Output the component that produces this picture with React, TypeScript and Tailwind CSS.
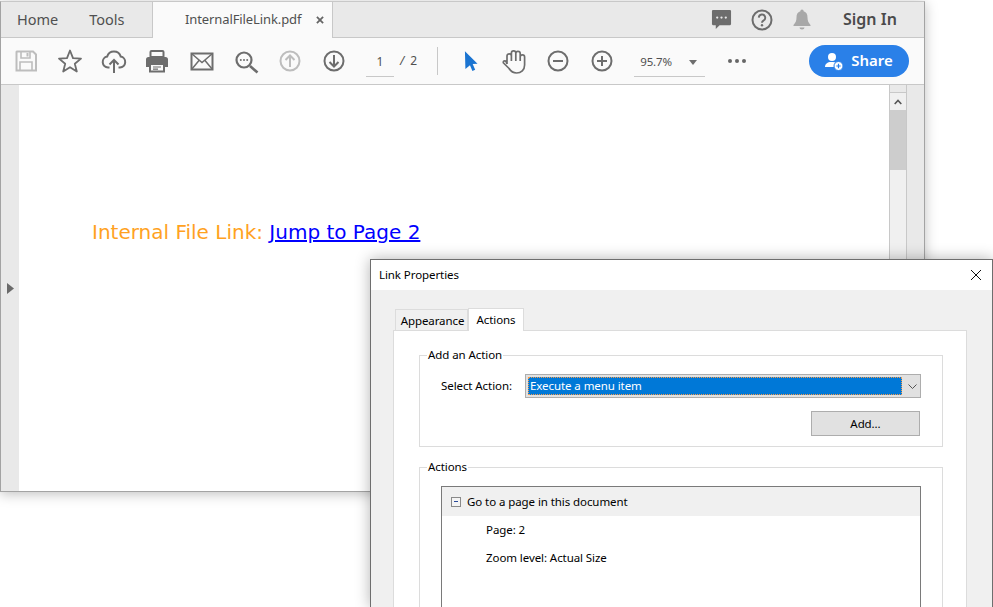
const GRAY = "#6d6d6d";

const ToolIcon = ({ children }: { children: React.ReactNode }): JSX.Element => (
  <div className="w-[44px] h-full flex items-center justify-center shrink-0">
    <svg width="26" height="26" viewBox="0 0 26 26" fill="none">
      {children}
    </svg>
  </div>
);

const TopBar = (): JSX.Element => (
  <div className="h-[36px] flex bg-[#e9e9e9] border-b border-[#c8c8c8] text-[14.5px] text-[#505050] shrink-0">
    <div className="w-[151px] flex items-center pl-[16px] gap-[31px]">
      <span>Home</span>
      <span>Tools</span>
    </div>
    <div className="w-[181px] -mb-px bg-[#fafafa] border-x border-[#c8c8c8] flex items-center pl-[32px] gap-[15px] text-[13px] tracking-[-0.1px]">
      <span>InternalFileLink.pdf</span>
      <svg width="8" height="8" viewBox="0 0 9 9">
        <path d="M1 1l7 7M8 1l-7 7" stroke="#666" strokeWidth="2" />
      </svg>
    </div>
    <div className="flex-1 flex items-center">
      <svg className="ml-[378px]" width="21" height="21" viewBox="0 0 22 22">
        <path d="M2 1h18a1.5 1.5 0 0 1 1 1v14a1.5 1.5 0 0 1-1 1H9l-4 4v-4H2a1.5 1.5 0 0 1-1-1V2a1.5 1.5 0 0 1 1-1z" fill={GRAY} />
        <circle cx="6.5" cy="9" r="1.2" fill="#e9e9e9" />
        <circle cx="11" cy="9" r="1.2" fill="#e9e9e9" />
        <circle cx="15.5" cy="9" r="1.2" fill="#e9e9e9" />
      </svg>
      <svg className="ml-[19px]" width="22" height="22" viewBox="0 0 22 22" fill="none">
        <circle cx="11" cy="11" r="9.5" stroke={GRAY} strokeWidth="2" />
        <path d="M7.8 8.6a3.2 3.2 0 1 1 4.6 3c-1 .6-1.4 1-1.4 2.2" stroke={GRAY} strokeWidth="1.9" />
        <circle cx="11" cy="16.3" r="1.2" fill={GRAY} />
      </svg>
      <svg className="ml-[20px]" width="18" height="21" viewBox="0 0 18 21">
        <path d="M9 0.5a1.6 1.6 0 0 1 1.6 1.8c3 .8 3.9 3.2 3.9 6.2 0 3.5 1 5.2 3 7.5v1H.5v-1c2-2.3 3-4 3-7.5 0-3 .9-5.4 3.9-6.2A1.6 1.6 0 0 1 9 .5z" fill="#a8a8a8" />
        <path d="M6.5 18.5h5a2.5 2 0 0 1-5 0z" fill="#a8a8a8" />
      </svg>
      <span className="ml-[32px] -mt-[2px] text-[16px] font-semibold text-[#4b4b4b]">Sign In</span>
    </div>
  </div>
);

const Toolbar = (): JSX.Element => (
  <div className="h-[47px] flex items-center pl-[3px] bg-[#fafafa] border-b border-[#c8c8c8] shrink-0 text-[#505050]">
    <ToolIcon>
      <path d="M4 3.5h16l3 3v16H3.5V4z" stroke="#bdbdbd" strokeWidth="2" />
      <path d="M8 4v6h9V4M7 22v-8h12v8" stroke="#bdbdbd" strokeWidth="1.6" />
      <path d="M13.5 5h2v3.5h-2z" fill="#bdbdbd" />
    </ToolIcon>
    <ToolIcon>
      <path d="M13 2.5l3 7.6 8 .5-6.2 5.1 2 7.8L13 19.2l-6.8 4.3 2-7.8L2 10.600l8-.5z" stroke={GRAY} strokeWidth="1.8" strokeLinejoin="round" />
    </ToolIcon>
    <ToolIcon>
      <path d="M8.500 19.500H7a5.500 5.500 0 0 1-.8-10.900 7 7 0 0 1 13.500 0A5.500 5.500 0 0 1 19 19.500h-1.500" stroke={GRAY} strokeWidth="2" />
      <path d="M13 25V12.500M8.500 16.500l4.500-4.500 4.500 4.500" stroke={GRAY} strokeWidth="2" />
    </ToolIcon>
    <ToolIcon>
      <path d="M6.500 3h11a1 1 0 0 1 1 1v5h-13V4a1 1 0 0 1 1-1z" stroke={GRAY} strokeWidth="2" />
      <path d="M3.500 9h17A2.500 2.500 0 0 1 23 11.500V19h-3v-4H4v4H1v-7.500A2.500 2.500 0 0 1 3.500 9z" fill={GRAY} />
      <path d="M5 16h14v7.500H5z" stroke={GRAY} strokeWidth="2" />
      <path d="M8 19h8M8 21.200h5" stroke={GRAY} strokeWidth="1.200" />
    </ToolIcon>
    <ToolIcon>
      <path d="M2.500 5.500h21v16h-21z" stroke={GRAY} strokeWidth="2" />
      <path d="M2.500 5.500L13 14.500l10.500-9M2.500 21.500l7.500-9M23.500 21.500l-7.500-9" stroke={GRAY} strokeWidth="1.500" />
    </ToolIcon>
    <ToolIcon>
      <circle cx="11" cy="12" r="7.500" stroke={GRAY} strokeWidth="2.200" />
      <path d="M17 18l7.500 6.500" stroke={GRAY} strokeWidth="2.600" />
      <circle cx="7.800" cy="12" r="1" fill={GRAY} />
      <circle cx="11" cy="12" r="1" fill={GRAY} />
      <circle cx="14.200" cy="12" r="1" fill={GRAY} />
    </ToolIcon>
    <ToolIcon>
      <circle cx="13" cy="13" r="9.500" stroke="#bdbdbd" strokeWidth="2" />
      <path d="M13 19V7.500M8.500 12L13 7.500l4.500 4.500" stroke="#bdbdbd" strokeWidth="2" />
    </ToolIcon>
    <ToolIcon>
      <circle cx="13" cy="13" r="9.500" stroke={GRAY} strokeWidth="2" />
      <path d="M13 7v11.500M8.500 14l4.500 4.500 4.500-4.500" stroke={GRAY} strokeWidth="2" />
    </ToolIcon>
    <div className="ml-[10px] w-[28px] h-[28px] mt-[3px] border-b border-[#c8c8c8] flex items-center justify-center text-[12px] shrink-0">
      1
    </div>
    <span className="ml-[6px] text-[12px] italic">/</span>
    <span className="ml-[6px] text-[12px]">2</span>
    <div className="ml-[20px] w-px h-[28px] bg-[#c8c8c8] shrink-0" />
    <div className="w-[10px]" />
    <div className="w-[44px] h-full flex items-center justify-center pl-[1px] shrink-0">
      <svg width="14" height="22" viewBox="0 0 15 22">
        <path d="M1 0.500L14.500 14l-5.200.3 2.700 6-3 1.300-2.600-6L1.500 19.500z" fill="#1b74d1" />
      </svg>
    </div>
    <ToolIcon>
      <path d="M6 16V8a2.200 2.200 0 0 1 4.400 0v5M10.400 8V5a2.200 2.200 0 0 1 4.400 0v8M14.800 8V5.500a2.200 2.200 0 0 1 4.400 0V13M19.200 9a2.200 2.200 0 0 1 4.400 0v8c0 5-3.500 8-8 8-4 0-6-2-7.500-4.500L2.500 15c-.8-1.600 1.400-3 2.500-1.500L6 16" stroke={GRAY} strokeWidth="1.700" strokeLinejoin="round" />
    </ToolIcon>
    <ToolIcon>
      <circle cx="13" cy="13" r="9.500" stroke={GRAY} strokeWidth="2" />
      <path d="M8 13h10" stroke={GRAY} strokeWidth="2" />
    </ToolIcon>
    <ToolIcon>
      <circle cx="13" cy="13" r="9.500" stroke={GRAY} strokeWidth="2" />
      <path d="M8 13h10M13 8v10" stroke={GRAY} strokeWidth="2" />
    </ToolIcon>
    <div className="ml-[10px] w-[71px] h-[28px] mt-[3px] border-b border-[#c8c8c8] flex items-center pl-[6px] text-[11.5px] tracking-[-0.1px] shrink-0">
      <span>95.7%</span>
      <svg className="ml-[17px]" width="8" height="5" viewBox="0 0 8 5">
        <path d="M0 0h8L4 5z" fill={GRAY} />
      </svg>
    </div>
    <div className="ml-[23px] flex gap-[3px] shrink-0">
      <div className="w-[4px] h-[4px] rounded-full bg-[#666]" />
      <div className="w-[4px] h-[4px] rounded-full bg-[#666]" />
      <div className="w-[4px] h-[4px] rounded-full bg-[#666]" />
    </div>
    <div className="ml-[63px] w-[100px] h-[32px] rounded-full bg-[#2a80e8] flex items-center pl-[15px] text-white text-[15px] font-semibold shrink-0">
      <svg width="20" height="20" viewBox="0 0 20 20">
        <circle cx="8" cy="6" r="4" fill="#fff" />
        <path d="M1 16c0-3 2.500-5 6-5h2c2 0 3 .8 3.500 1.500A5 5 0 0 0 11 16z" fill="#fff" />
        <circle cx="14.500" cy="15" r="4.500" fill="#fff" stroke="#2a80e8" strokeWidth="1" />
        <path d="M12.300 15h4.400M14.500 12.800v4.400" stroke="#2a80e8" strokeWidth="1.200" />
      </svg>
      <span className="ml-[7px] -mt-[2px]">Share</span>
    </div>
  </div>
);

const PdfWindow = (): JSX.Element => (
  <div className="absolute left-0 top-px w-[925px] h-[491px] flex flex-col border border-[#a3a3a3] border-t-[#c8c8c8] bg-white shadow-[0_2px_12px_rgba(0,0,0,0.25)] font-['Noto_Sans',sans-serif]">
    <TopBar />
    <Toolbar />
    <div className="flex-1 flex min-h-0">
      <div className="w-[18px] bg-[#e9e9e9] flex items-center justify-center pl-px shrink-0">
        <svg width="7" height="11" viewBox="0 0 7 11">
          <path d="M0 0l7 5.500L0 11z" fill="#6a6a6a" />
        </svg>
      </div>
      <div className="flex-1 pl-[73px] pt-[132px] font-['DejaVu_Sans',sans-serif] text-[20px] text-[#ffa21f] whitespace-nowrap">
        Internal File Link: <span className="text-[#0000ff] underline">Jump to Page 2</span>
      </div>
      <div className="w-[18px] bg-[#f0f0f0] border-x border-[#c8c8c8] flex flex-col shrink-0">
        <div className="h-[8px] bg-[#e9e9e9] border-b border-[#c8c8c8]" />
        <div className="h-[17px] flex items-center justify-center">
          <svg width="8" height="6" viewBox="0 0 8 6" fill="none">
            <path d="M.7 5L4 1.500 7.300 5" stroke="#555" strokeWidth="1.600" />
          </svg>
        </div>
        <div className="h-[60px] bg-[#cdcdcd]" />
      </div>
      <div className="w-[17px] bg-[#e9e9e9] shrink-0" />
    </div>
  </div>
);

const Group = ({ title, className, children }: { title: string; className: string; children: React.ReactNode }): JSX.Element => (
  <fieldset className={`border border-[#dcdcdc] pl-[21px] pr-[21px] ${className}`}>
    <legend className="-ml-[14px] px-[1px] leading-[14px]">{title}</legend>
    {children}
  </fieldset>
);

const LinkDialog = (): JSX.Element => (
  <div className="absolute left-[370px] top-[259px] w-[623px] h-[348px] flex flex-col border border-[#6e6e6e] border-b-0 bg-[#f0f0f0] shadow-[0_0_14px_rgba(0,0,0,0.3)] text-[11.5px] tracking-[-0.08px] text-black font-['Noto_Sans',sans-serif] overflow-hidden">
    <div className="h-[30px] bg-white flex items-center justify-between pl-[8px] pr-[10px] shrink-0">
      <span>Link Properties</span>
      <svg width="12" height="12" viewBox="0 0 12 12">
        <path d="M1 1l10 10M11 1L1 11" stroke="#111" strokeWidth="1" />
      </svg>
    </div>
    <div className="flex items-end h-[40px] pl-[24px] shrink-0">
      <div className="w-[73px] h-[21px] pt-[2px] pl-[2px] flex items-center justify-center bg-[#f0f0f0] border border-b-0 border-[#dcdcdc]">Appearance</div>
      <div className="w-[56px] h-[23px] -mb-px z-10 flex items-center justify-center bg-white border border-b-0 border-[#dcdcdc]">Actions</div>
    </div>
    <div className="ml-[22px] mr-[25px] flex-1 bg-white border border-[#dcdcdc] pl-[25px] pr-[23px] pt-[17px]">
      <Group title="Add an Action" className="h-[99px]">
        <div className="flex items-center h-[24px] mt-[12px]">
          <span className="w-[84px] shrink-0">Select Action:</span>
          <div className="w-[396px] h-[24px] flex items-center bg-[#e1e1e1] border border-[#adadad] pl-[2px] shrink-0">
            <div className="w-[374px] h-[18px] flex items-center bg-[#0078d7] border border-dotted border-[#f59b4a] pl-[1px] text-white">
              Execute a menu item
            </div>
            <svg className="ml-[6px]" width="9" height="5" viewBox="0 0 9 5" fill="none">
              <path d="M.5.500l4 4 4-4" stroke="#555" strokeWidth="1" />
            </svg>
          </div>
        </div>
        <div className="flex justify-end mt-[13px] mr-px">
          <div className="w-[109px] h-[25px] flex items-center justify-center bg-[#e1e1e1] border border-[#adadad]">Add...</div>
        </div>
      </Group>
      <Group title="Actions" className="mt-[13px] h-[200px]">
        <div className="mt-[12px] h-[200px] border border-[#7a7a7a]">
          <div className="h-[29px] bg-[#f0f0f0] flex items-center pl-[9px]">
            <div className="w-[10px] h-[10px] border border-[#8a8a8a] bg-[#f4f4f4] flex items-center justify-center">
              <div className="w-[4px] h-px bg-[#2a4a9a]" />
            </div>
            <span className="ml-[6px]">Go to a page in this document</span>
          </div>
          <div className="pl-[44px] h-[28px] flex items-center">Page: 2</div>
          <div className="pl-[44px] h-[28px] flex items-center">Zoom level: Actual Size</div>
        </div>
      </Group>
    </div>
  </div>
);

const App = (): JSX.Element => (
  <div className="relative w-[993px] h-[607px] bg-white overflow-hidden">
    <PdfWindow />
    <LinkDialog />
  </div>
);

export default App;
